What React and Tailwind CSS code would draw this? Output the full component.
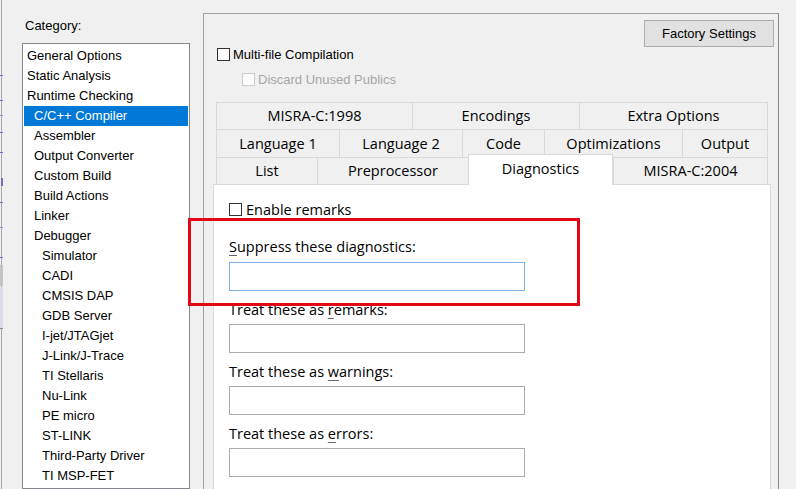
import React from "react";

const items = [
  ["General Options", 0],
  ["Static Analysis", 0],
  ["Runtime Checking", 0],
  ["C/C++ Compiler", 1, true],
  ["Assembler", 1],
  ["Output Converter", 1],
  ["Custom Build", 1],
  ["Build Actions", 1],
  ["Linker", 1],
  ["Debugger", 1],
  ["Simulator", 2],
  ["CADI", 2],
  ["CMSIS DAP", 2],
  ["GDB Server", 2],
  ["I-jet/JTAGjet", 2],
  ["J-Link/J-Trace", 2],
  ["TI Stellaris", 2],
  ["Nu-Link", 2],
  ["PE micro", 2],
  ["ST-LINK", 2],
  ["Third-Party Driver", 2],
  ["TI MSP-FET", 2],
];

const seg = "font-['Open_Sans',sans-serif] text-[14.5px]";

function Tab({ label, w, last }) {
  return (
    <div
      className={`${w} h-full flex items-center justify-center border-l border-[#d9d9d9] ${
        last ? "border-r" : ""
      } bg-[#f0f0f0] ${seg}`}
    >
      {label}
    </div>
  );
}

function Field({ label, ul, rest, pre, focus, first }) {
  return (
    <>
      <div className={`${first ? "mt-[21px]" : "mt-[9px]"} leading-[20px] h-[20px] ${seg}`}>
        {pre}
        <span className="underline underline-offset-[3px] decoration-[#6a6a6a]">{ul}</span>
        {rest}
      </div>
      <div
        className={`${first ? "mt-[5px]" : "mt-[4px]"} w-[296px] h-[29px] bg-white border ${
          focus ? "border-[#7eb4ea]" : "border-[#ababab]"
        }`}
      />
    </>
  );
}

export default function App() {
  return (
    <div className="w-[796px] h-[489px] bg-[#f0f0f0] relative overflow-hidden flex font-['Liberation_Sans',sans-serif] text-[13px] text-black">
      <svg width="3" height="489" className="shrink-0">
        <rect x="1" y="0" width="1" height="489" fill="#a8a8a8" />
        <rect x="0" y="75" width="3" height="1" fill="#7a6cc0" />
        <rect x="0" y="100" width="3" height="1" fill="#7a6cc0" />
        <rect x="0" y="115" width="3" height="1" fill="#9a90d0" />
        <rect x="0" y="132" width="3" height="1" fill="#7a6cc0" />
        <rect x="0" y="152" width="3" height="1" fill="#7a6cc0" />
        <rect x="1" y="178" width="2" height="8" fill="#7a6cc0" />
        <rect x="0" y="202" width="3" height="1" fill="#7a6cc0" />
        <rect x="0" y="227" width="3" height="1" fill="#9a90d0" />
        <rect x="0" y="257" width="3" height="1" fill="#7a6cc0" />
        <rect x="0" y="265" width="3" height="21" fill="#c4c4c4" />
        <rect x="0" y="287" width="3" height="41" fill="#d8dde6" />
        <rect x="0" y="328" width="3" height="1" fill="#8a8a8a" />
      </svg>

      <div className="ml-[19px] w-[168px] shrink-0 flex flex-col">
        <div className="pt-[18px] leading-[16px] pl-[3px]">Category:</div>
        <div className="mt-[9px] h-[600px] bg-white border border-[#828790] pt-[2px] px-[1px] flex flex-col">
          {items.map(([t, lvl, sel]) => (
            <div
              key={t}
              className={`h-[20px] leading-[20px] whitespace-nowrap ${
                lvl === 0 ? "pl-[3px]" : lvl === 1 ? "pl-[10px]" : "pl-[18px]"
              } ${sel ? "bg-[#0078d7] text-white" : ""}`}
            >
              {t}
            </div>
          ))}
        </div>
      </div>

      <div className="ml-[13px] mt-[13px] w-[576px] h-[600px] shrink-0 border-l border-t border-r border-l-[#a0a0a0] border-t-[#a0a0a0] border-r-[#888888] flex flex-col">
        <div className="flex justify-end pr-[4px] pt-[6px]">
          <div className="w-[130px] h-[27px] bg-[#e1e1e1] border border-[#adadad] flex items-center justify-center">
            Factory Settings
          </div>
        </div>
        <div className="mt-[1px] pl-[13px] h-[13px] flex items-center gap-[3px]">
          <div className="w-[13px] h-[13px] bg-white border border-[#333333]" />
          <span>Multi-file Compilation</span>
        </div>
        <div className="mt-[12px] pl-[38px] h-[13px] flex items-center gap-[3px]">
          <div className="w-[13px] h-[13px] bg-[#fcfcfc] border border-[#cccccc]" />
          <span className="text-[#a6a6a6]">Discard Unused Publics</span>
        </div>

        <div className="mt-[16px] ml-[9px] mr-[7px] flex flex-col">
          <div className="px-[3px] flex flex-col">
            <div className="h-[27px] flex border-t border-[#d9d9d9]">
              <Tab label="MISRA-C:1998" w="w-[196px]" />
              <Tab label="Encodings" w="w-[167px]" />
              <Tab label="Extra Options" w="w-[189px]" last />
            </div>
            <div className="h-[28px] flex border-t border-[#d9d9d9]">
              <Tab label="Language 1" w="w-[123px]" />
              <Tab label="Language 2" w="w-[123px]" />
              <Tab label="Code" w="w-[82px]" />
              <Tab label="Optimizations" w="w-[138px]" />
              <Tab label="Output" w="w-[86px]" last />
            </div>
            <div className="h-[27px] flex border-t border-[#d9d9d9]">
              <Tab label="List" w="w-[101px]" />
              <Tab label="Preprocessor" w="w-[151px]" />
              <div
                className={`w-[145px] -mt-[4px] -mb-[1px] relative z-10 bg-white border-l border-r border-t border-[#d9d9d9] flex items-center justify-center pb-[3px] ${seg}`}
              >
                Diagnostics
              </div>
              <Tab label="MISRA-C:2004" w="w-[155px]" last />
            </div>
          </div>
          <div className="h-[400px] bg-white border border-[#d9d9d9] pl-[15px] pt-[18px] flex flex-col">
            <div className="h-[13px] flex items-center gap-[4px]">
              <div className="w-[13px] h-[13px] shrink-0 bg-white border border-[#333333]" />
              <span className={`${seg} leading-[20px]`}>
                E<span className="underline underline-offset-[3px] decoration-[#6a6a6a]">n</span>able remarks
              </span>
            </div>
            <Field first focus pre="" ul="S" rest="uppress these diagnostics:" />
            <Field pre="Treat these as " ul="r" rest="emarks:" />
            <Field pre="Treat these as " ul="w" rest="arnings:" />
            <Field pre="Treat these as " ul="e" rest="rrors:" />
          </div>
        </div>
      </div>

      <div className="absolute left-[188px] top-[218px] w-[392px] h-[88px] border-[3px] border-[#e30613]" />
    </div>
  );
}
